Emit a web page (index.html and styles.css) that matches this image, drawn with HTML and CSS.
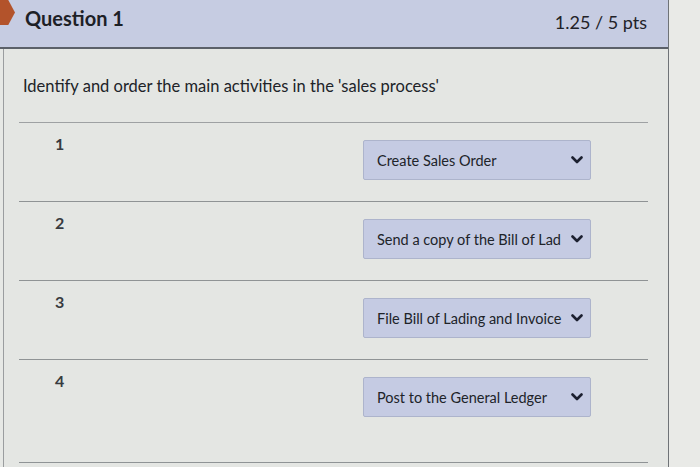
FILE: index.html
```html
<!DOCTYPE html>
<html>
<head>
<meta charset="utf-8">
<link rel="stylesheet" href="styles.css">
</head>
<body>
<div class="page">
  <div class="flag"></div>
  <div class="panel">
    <div class="header">
      <div class="title">Question 1</div>
      <div class="pts">1.25 / 5 pts</div>
    </div>
    <div class="body">
      <p class="prompt">Identify and order the main activities in the 'sales process'</p>
      <div class="rows">
        <div class="row">
          <div class="num">1</div>
          <div class="select"><span>Create Sales Order</span><svg class="chev" width="12" height="8" viewBox="0 0 12 8"><polyline points="1.5,1.5 6,6 10.5,1.5" fill="none" stroke="#1c2030" stroke-width="2.6" stroke-linecap="round" stroke-linejoin="round"/></svg></div>
        </div>
        <div class="row">
          <div class="num">2</div>
          <div class="select"><span>Send a copy of the Bill of Lad</span><svg class="chev" width="12" height="8" viewBox="0 0 12 8"><polyline points="1.5,1.5 6,6 10.5,1.5" fill="none" stroke="#1c2030" stroke-width="2.6" stroke-linecap="round" stroke-linejoin="round"/></svg></div>
        </div>
        <div class="row">
          <div class="num">3</div>
          <div class="select"><span>File Bill of Lading and Invoice</span><svg class="chev" width="12" height="8" viewBox="0 0 12 8"><polyline points="1.5,1.5 6,6 10.5,1.5" fill="none" stroke="#1c2030" stroke-width="2.6" stroke-linecap="round" stroke-linejoin="round"/></svg></div>
        </div>
        <div class="row last">
          <div class="num">4</div>
          <div class="select"><span>Post to the General Ledger</span><svg class="chev" width="12" height="8" viewBox="0 0 12 8"><polyline points="1.5,1.5 6,6 10.5,1.5" fill="none" stroke="#1c2030" stroke-width="2.6" stroke-linecap="round" stroke-linejoin="round"/></svg></div>
        </div>
      </div>
    </div>
  </div>
  <div class="side"></div>
</div>
</body>
</html>
```
FILE: styles.css
```css
* { box-sizing: border-box; }
html, body { margin: 0; padding: 0; }
body {
  width: 700px;
  height: 467px;
  overflow: hidden;
  background: #e6e8e5;
  font-family: Lato, "Open Sans", sans-serif;
  color: #2a2d33;
}
.page {
  position: relative;
  display: flex;
  height: 467px;
}
.flag {
  position: absolute;
  left: 0;
  top: 0;
  width: 15px;
  height: 25px;
  background: #b3532b;
  clip-path: polygon(0 0, 55% 0, 100% 50%, 55% 100%, 0 100%);
  z-index: 2;
}
.panel {
  width: 669px;
  display: flex;
  flex-direction: column;
  border-right: 1px solid #6f7377;
}
.header {
  height: 49px;
  background: #c6cce2;
  border-bottom: 2px solid #5b6069;
  display: flex;
  justify-content: space-between;
  padding: 6px 21px 0 25px;
}
.title {
  font-size: 20px;
  font-weight: 700;
  color: #1d2026;
  line-height: 24px;
}
.pts {
  font-size: 18px;
  color: #1f2228;
  line-height: 24px;
  margin-top: 4px;
}
.body {
  flex: 1;
  margin-left: 3px;
  border-left: 1px solid #9a9d9f;
  background: #e4e6e3;
  padding: 0 20px 0 15px;
}
.prompt {
  margin: 27px 0 0 4px;
  font-size: 16.5px;
  line-height: 20px;
  color: #202328;
}
.rows {
  margin-top: 26px;
  border-top: 1px solid #9ea1a3;
}
.row {
  display: flex;
  height: 79px;
  border-bottom: 1px solid #8f9395;
}
.row.last {
  height: 103px;
}
.num {
  width: 344px;
  padding: 11px 0 0 36px;
  font-size: 16px;
  font-weight: 700;
  color: #383b40;
}
.select {
  margin-top: 17px;
  width: 228px;
  height: 40px;
  background: #c5cbe3;
  border: 1px solid #adb4cc;
  border-radius: 2px;
  display: flex;
  align-items: center;
  justify-content: space-between;
  padding: 0 7px 0 13px;
  font-size: 14.5px;
  color: #202329;
}
.select span {
  white-space: nowrap;
  overflow: hidden;
  width: 188px;
}
.side {
  flex: 1;
  background: #e9eae7;
}
```
